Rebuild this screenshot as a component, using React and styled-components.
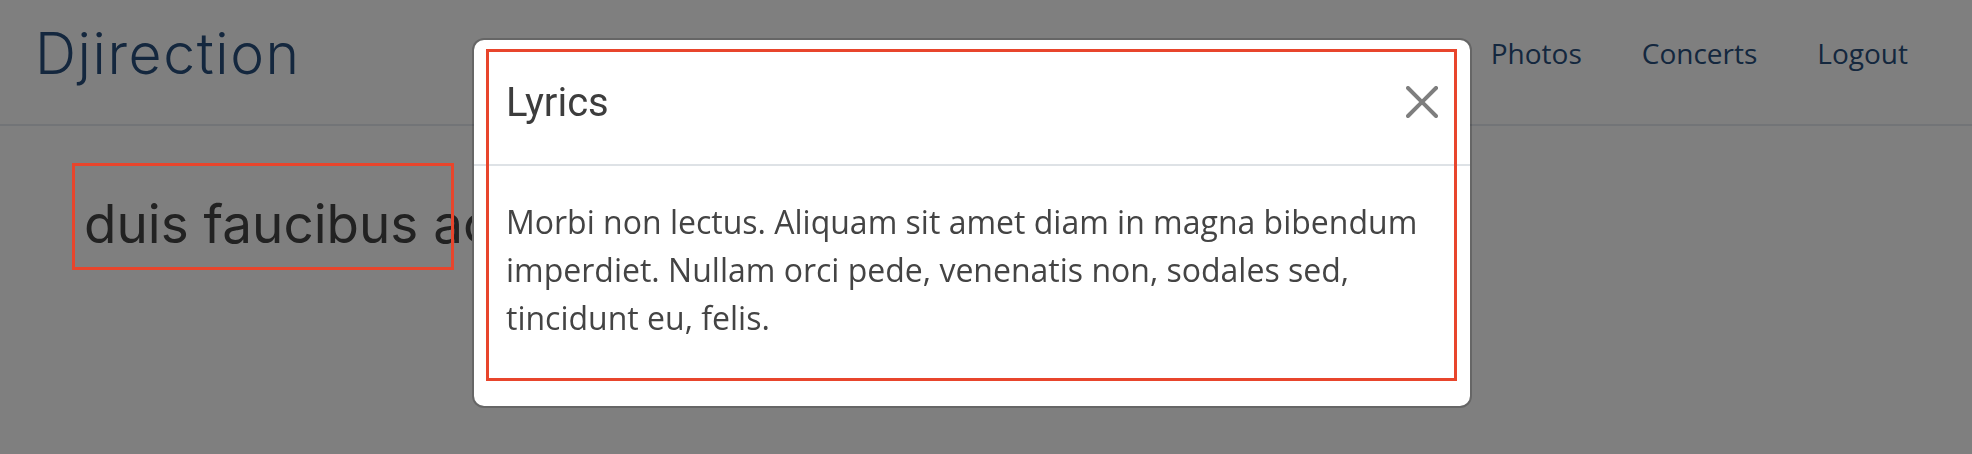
import React from "react";
import styled, { createGlobalStyle } from "styled-components";

const GlobalStyle = createGlobalStyle`
  html, body { margin: 0; padding: 0; background: #ffffff; overflow: hidden; }
  * { box-sizing: border-box; }
`;

const Page = styled.div`
  width: 1972px;
  height: 454px;
  position: relative;
  background: #ffffff;
`;

const Navbar = styled.header`
  height: 126px;
  display: flex;
  align-items: center;
  justify-content: space-between;
  padding: 0 34px 16px 32px;
  border-bottom: 2px solid #e4e9ef;
`;

const Logo = styled.a`
  font-family: Inter, "Noto Sans", sans-serif;
  font-size: 57px;
  font-weight: 300;
  line-height: 1.21;
  color: #284f7c;
  text-decoration: none;
  padding-left: 3px;
  letter-spacing: 1.6px;
`;

const NavList = styled.nav`
  display: flex;
  align-items: center;
  padding-bottom: 2px;
`;

const NavLink = styled.a`
  font-family: "Open Sans", "Noto Sans", sans-serif;
  font-size: 28px;
  line-height: 1.362;
  color: #284f7c;
  text-decoration: none;
  padding: 0 30px;
`;

const Main = styled.main`
  padding: 37px 0 0 72px;
`;

const HeadingBox = styled.div`
  position: relative;
  width: 382px;
  height: 107px;
  padding: 29px 0 0 12px;
  white-space: nowrap;
`;

const Heading = styled.h1`
  margin: 0;
  width: 388px;
  overflow: hidden;
  font-family: Inter, "Noto Sans", sans-serif;
  font-size: 53px;
  font-weight: 400;
  line-height: 1.21;
  color: #444444;
`;

const Highlight = styled.div`
  position: absolute;
  top: ${(p) => p.$top}px;
  left: ${(p) => p.$left}px;
  right: ${(p) => p.$right}px;
  bottom: ${(p) => p.$bottom}px;
  border: 3px solid #e8452c;
  pointer-events: none;
  z-index: 2;
`;

const Backdrop = styled.div`
  position: fixed;
  inset: 0;
  background: rgba(0, 0, 0, 0.5);
`;

const Dialog = styled.div`
  width: 1000px;
  margin: 38px 0 0 472px;
`;

const ModalContent = styled.div`
  position: relative;
  background: #ffffff;
  background-clip: padding-box;
  border: 2px solid rgba(0, 0, 0, 0.2);
  border-radius: 12px;
`;

const ModalHeader = styled.div`
  display: flex;
  align-items: center;
  justify-content: space-between;
  padding: 33px 32px 31px;
  border-bottom: 2px solid #dee2e6;
`;

const ModalTitle = styled.h5`
  margin: 0;
  font-family: Roboto, "Noto Sans", sans-serif;
  font-size: 40px;
  font-weight: 400;
  line-height: 60px;
  color: #3d3d3d;
`;

const CloseButton = styled.button`
  width: 32px;
  height: 32px;
  padding: 0;
  margin-top: -2px;
  border: none;
  background: transparent;
  display: flex;
  align-items: center;
  justify-content: center;
  cursor: pointer;
  opacity: 0.5;
`;

const ModalBody = styled.div`
  padding: 32px;
`;

const Lyrics = styled.p`
  margin: 0 0 32px;
  font-family: "Open Sans", "Noto Sans", sans-serif;
  font-size: 32px;
  line-height: 48px;
  color: #444444;
`;

export default function App() {
  return (
    <Page>
      <GlobalStyle />
      <Navbar>
        <Logo href="#">Djirection</Logo>
        <NavList>
          <NavLink href="#">Photos</NavLink>
          <NavLink href="#">Concerts</NavLink>
          <NavLink href="#">Logout</NavLink>
        </NavList>
      </Navbar>
      <Main>
        <HeadingBox>
          <Heading>duis faucibus accumsan odio</Heading>
          <Highlight $top={0} $left={0} $right={0} $bottom={0} />
        </HeadingBox>
      </Main>
      <Backdrop>
        <Dialog>
          <ModalContent>
            <ModalHeader>
              <ModalTitle>Lyrics</ModalTitle>
              <CloseButton aria-label="Close">
                <svg width="32" height="32" viewBox="0 0 16 16" fill="#000">
                  <path d="M.293.293a1 1 0 0 1 1.414 0L8 6.586 14.293.293a1 1 0 1 1 1.414 1.414L9.414 8l6.293 6.293a1 1 0 0 1-1.414 1.414L8 9.414l-6.293 6.293a1 1 0 0 1-1.414-1.414L6.586 8 .293 1.707a1 1 0 0 1 0-1.414z" />
                </svg>
              </CloseButton>
            </ModalHeader>
            <ModalBody>
              <Lyrics>
                Morbi non lectus. Aliquam sit amet diam in magna bibendum imperdiet. Nullam orci pede, venenatis non, sodales sed, tincidunt eu, felis.
              </Lyrics>
            </ModalBody>
            <Highlight $top={9} $left={12} $right={13} $bottom={25} />
          </ModalContent>
        </Dialog>
      </Backdrop>
    </Page>
  );
}
